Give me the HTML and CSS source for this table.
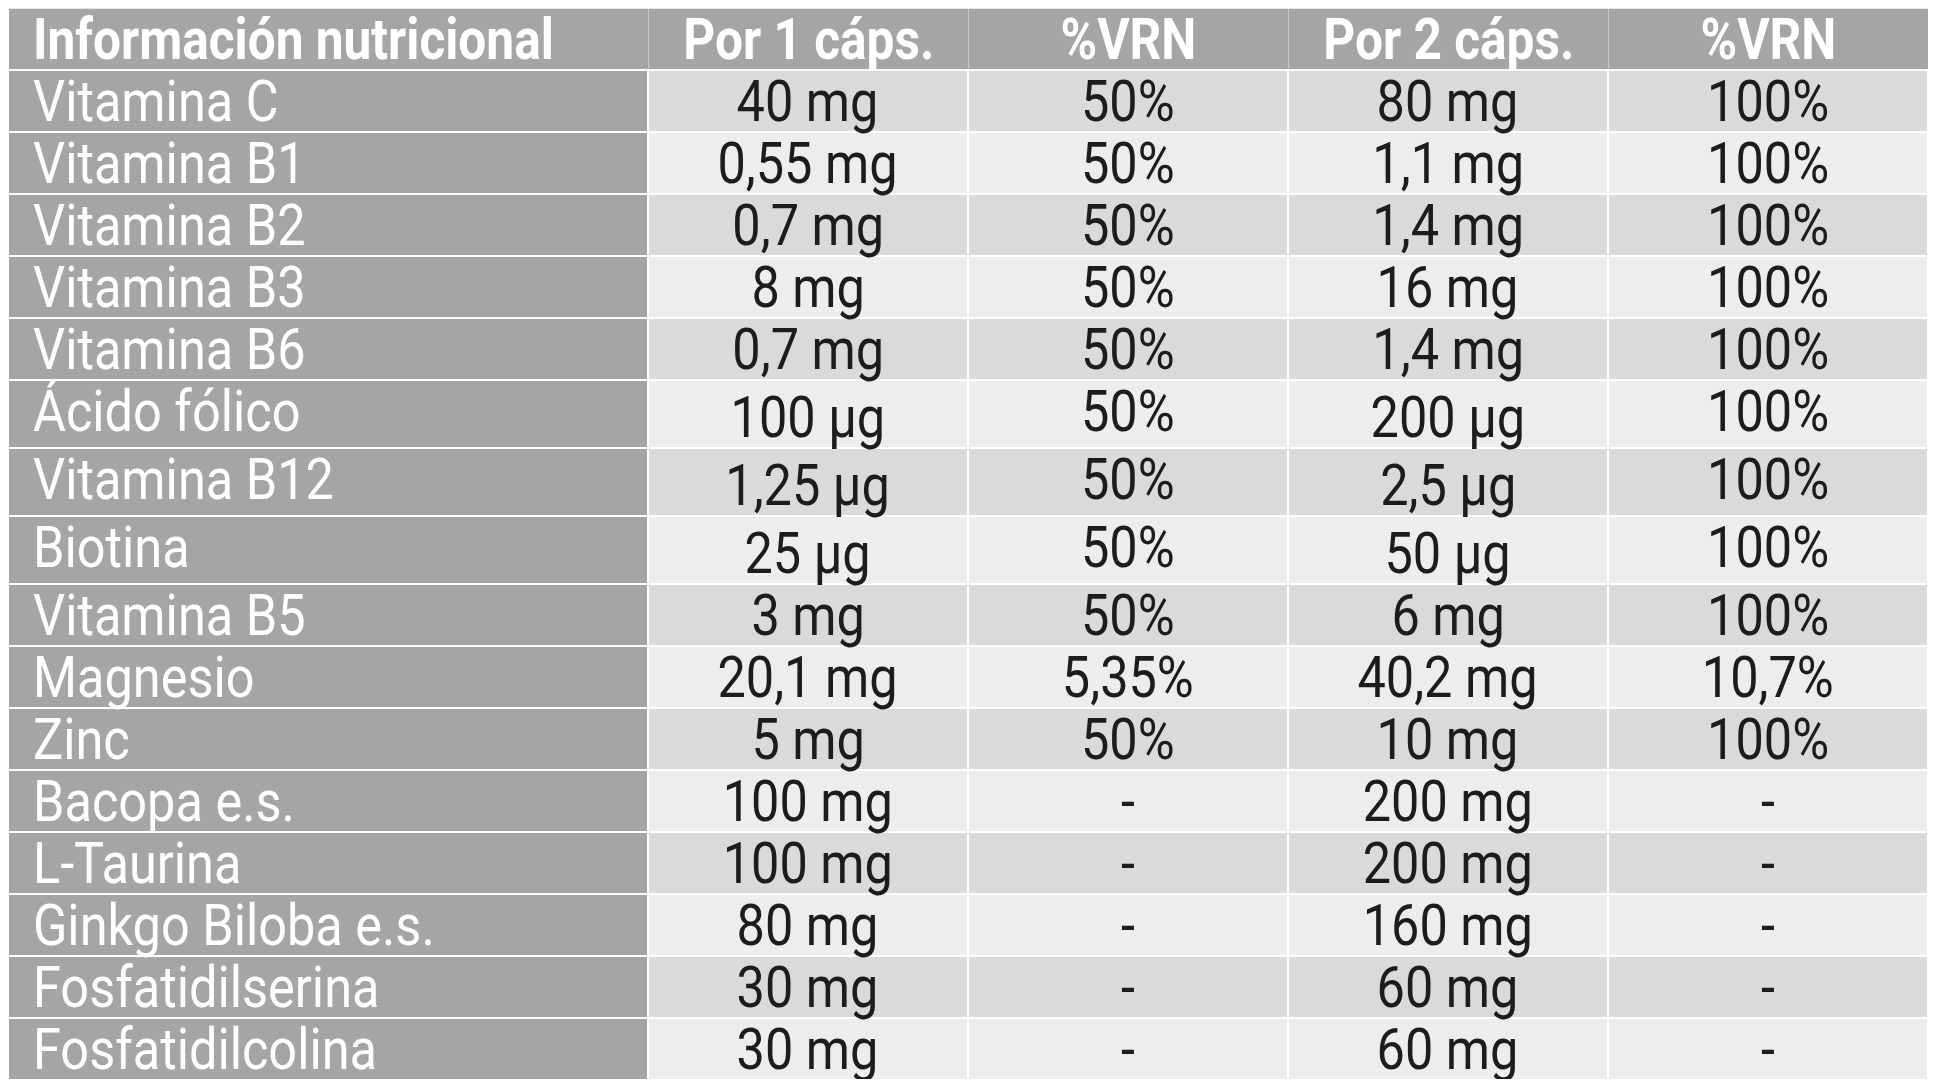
FILE: index.html
```html
<!DOCTYPE html>
<html lang="es">
<head>
<meta charset="utf-8">
<title>Información nutricional</title>
<link rel="stylesheet" href="styles.css">
</head>
<body>
<div class="sheet">
  <div class="row head">
    <div class="cell name"><span class="t">Información nutricional</span></div>
    <div class="cell"><span class="t">Por 1 cáps.</span></div>
    <div class="cell"><span class="t">%VRN</span></div>
    <div class="cell"><span class="t">Por 2 cáps.</span></div>
    <div class="cell"><span class="t">%VRN</span></div>
  </div>
  <div class="body">
    <div class="row dark">
      <div class="cell name"><span class="t">Vitamina C</span></div>
      <div class="cell"><span class="t">40 mg</span></div>
      <div class="cell"><span class="t">50%</span></div>
      <div class="cell"><span class="t">80 mg</span></div>
      <div class="cell"><span class="t">100%</span></div>
    </div>
    <div class="row light">
      <div class="cell name"><span class="t">Vitamina B1</span></div>
      <div class="cell"><span class="t">0,55 mg</span></div>
      <div class="cell"><span class="t">50%</span></div>
      <div class="cell"><span class="t">1,1 mg</span></div>
      <div class="cell"><span class="t">100%</span></div>
    </div>
    <div class="row dark">
      <div class="cell name"><span class="t">Vitamina B2</span></div>
      <div class="cell"><span class="t">0,7 mg</span></div>
      <div class="cell"><span class="t">50%</span></div>
      <div class="cell"><span class="t">1,4 mg</span></div>
      <div class="cell"><span class="t">100%</span></div>
    </div>
    <div class="row light">
      <div class="cell name"><span class="t">Vitamina B3</span></div>
      <div class="cell"><span class="t">8 mg</span></div>
      <div class="cell"><span class="t">50%</span></div>
      <div class="cell"><span class="t">16 mg</span></div>
      <div class="cell"><span class="t">100%</span></div>
    </div>
    <div class="row dark">
      <div class="cell name"><span class="t">Vitamina B6</span></div>
      <div class="cell"><span class="t">0,7 mg</span></div>
      <div class="cell"><span class="t">50%</span></div>
      <div class="cell"><span class="t">1,4 mg</span></div>
      <div class="cell"><span class="t">100%</span></div>
    </div>
    <div class="row light tall">
      <div class="cell name"><span class="t">Ácido fólico</span></div>
      <div class="cell mu"><span class="t">100 µg</span></div>
      <div class="cell"><span class="t">50%</span></div>
      <div class="cell mu"><span class="t">200 µg</span></div>
      <div class="cell"><span class="t">100%</span></div>
    </div>
    <div class="row dark tall">
      <div class="cell name"><span class="t">Vitamina B12</span></div>
      <div class="cell mu"><span class="t">1,25 µg</span></div>
      <div class="cell"><span class="t">50%</span></div>
      <div class="cell mu"><span class="t">2,5 µg</span></div>
      <div class="cell"><span class="t">100%</span></div>
    </div>
    <div class="row light tall">
      <div class="cell name"><span class="t">Biotina</span></div>
      <div class="cell mu"><span class="t">25 µg</span></div>
      <div class="cell"><span class="t">50%</span></div>
      <div class="cell mu"><span class="t">50 µg</span></div>
      <div class="cell"><span class="t">100%</span></div>
    </div>
    <div class="row dark">
      <div class="cell name"><span class="t">Vitamina B5</span></div>
      <div class="cell"><span class="t">3 mg</span></div>
      <div class="cell"><span class="t">50%</span></div>
      <div class="cell"><span class="t">6 mg</span></div>
      <div class="cell"><span class="t">100%</span></div>
    </div>
    <div class="row light">
      <div class="cell name"><span class="t">Magnesio</span></div>
      <div class="cell"><span class="t">20,1 mg</span></div>
      <div class="cell"><span class="t">5,35%</span></div>
      <div class="cell"><span class="t">40,2 mg</span></div>
      <div class="cell"><span class="t">10,7%</span></div>
    </div>
    <div class="row dark">
      <div class="cell name"><span class="t">Zinc</span></div>
      <div class="cell"><span class="t">5 mg</span></div>
      <div class="cell"><span class="t">50%</span></div>
      <div class="cell"><span class="t">10 mg</span></div>
      <div class="cell"><span class="t">100%</span></div>
    </div>
    <div class="row light">
      <div class="cell name"><span class="t">Bacopa e.s.</span></div>
      <div class="cell"><span class="t">100 mg</span></div>
      <div class="cell"><span class="t">-</span></div>
      <div class="cell"><span class="t">200 mg</span></div>
      <div class="cell"><span class="t">-</span></div>
    </div>
    <div class="row dark">
      <div class="cell name"><span class="t">L-Taurina</span></div>
      <div class="cell"><span class="t">100 mg</span></div>
      <div class="cell"><span class="t">-</span></div>
      <div class="cell"><span class="t">200 mg</span></div>
      <div class="cell"><span class="t">-</span></div>
    </div>
    <div class="row light">
      <div class="cell name"><span class="t">Ginkgo Biloba e.s.</span></div>
      <div class="cell"><span class="t">80 mg</span></div>
      <div class="cell"><span class="t">-</span></div>
      <div class="cell"><span class="t">160 mg</span></div>
      <div class="cell"><span class="t">-</span></div>
    </div>
    <div class="row dark">
      <div class="cell name"><span class="t">Fosfatidilserina</span></div>
      <div class="cell"><span class="t">30 mg</span></div>
      <div class="cell"><span class="t">-</span></div>
      <div class="cell"><span class="t">60 mg</span></div>
      <div class="cell"><span class="t">-</span></div>
    </div>
    <div class="row light">
      <div class="cell name"><span class="t">Fosfatidilcolina</span></div>
      <div class="cell"><span class="t">30 mg</span></div>
      <div class="cell"><span class="t">-</span></div>
      <div class="cell"><span class="t">60 mg</span></div>
      <div class="cell"><span class="t">-</span></div>
    </div>
  </div>
</div>
</body>
</html>
```

FILE: styles.css
```css
html, body {
  margin: 0;
  padding: 0;
  background: #ffffff;
}

body {
  font-family: Roboto, "Liberation Sans", sans-serif;
}

.sheet {
  width: 1918px;
  margin: 8px 0 0 9px;
  border-top: 1px solid #e4e4e4;
  display: flex;
  flex-direction: column;
  gap: 2px;
}

.body {
  display: flex;
  flex-direction: column;
  gap: 2px;
}

.row {
  display: grid;
  grid-template-columns: 638px 318px 318px 318px 318px;
  column-gap: 2px;
  height: 60px;
}

.row.tall {
  height: 66px;
}

.cell {
  font-size: 58px;
  line-height: 60px;
  text-align: center;
  color: #1c1c1c;
  white-space: nowrap;
}

.cell.mu {
  padding-top: 6px;
}

.t {
  display: inline-block;
  transform: scaleX(0.87);
  transform-origin: center;
}

.cell.name {
  text-align: left;
  padding-left: 24px;
  color: #ffffff;
  background: #a5a5a5;
}

.cell.name .t {
  transform-origin: left center;
}

.head {
  background: #c6c6c6;
  column-gap: 1px;
  grid-template-columns: 639px 319px 319px 319px 319px;
}

.head .cell {
  background: #a5a5a5;
  color: #ffffff;
  font-weight: 700;
}

.head .t {
  transform: scaleX(0.855);
}

.dark .cell {
  background: #dadada;
}

.light .cell {
  background: #ededed;
}

.dark .cell.name,
.light .cell.name {
  background: #a5a5a5;
}
```
